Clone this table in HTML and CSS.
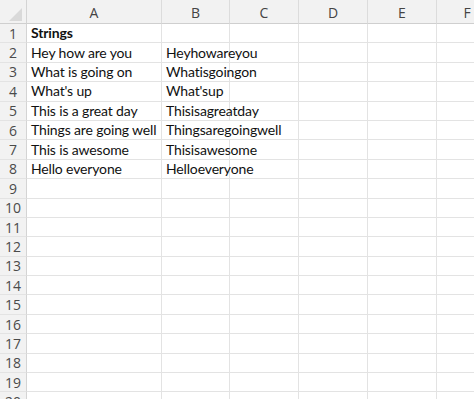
FILE: index.html
```html
<!DOCTYPE html>
<html lang="en">
<head>
<meta charset="utf-8">
<title>Sheet1</title>
<link rel="stylesheet" href="styles.css">
</head>
<body>
<div class="sheet">
  <div class="corner"><svg class="corner-mark" width="27" height="24" viewBox="0 0 27 24"><polygon points="22,8 22,21 9,21" fill="#d9d9d9"/></svg></div>
  <div class="col-head">A</div>
  <div class="col-head">B</div>
  <div class="col-head">C</div>
  <div class="col-head">D</div>
  <div class="col-head">E</div>
  <div class="col-head last">F</div>

  <div class="row-head">1</div><div class="cell bold">Strings</div><div class="cell"></div><div class="cell"></div><div class="cell"></div><div class="cell"></div><div class="cell"></div>
  <div class="row-head">2</div><div class="cell">Hey how are you</div><div class="cell">Heyhowareyou</div><div class="cell"></div><div class="cell"></div><div class="cell"></div><div class="cell"></div>
  <div class="row-head">3</div><div class="cell">What is going on</div><div class="cell">Whatisgoingon</div><div class="cell"></div><div class="cell"></div><div class="cell"></div><div class="cell"></div>
  <div class="row-head">4</div><div class="cell">What's up</div><div class="cell">What'sup</div><div class="cell"></div><div class="cell"></div><div class="cell"></div><div class="cell"></div>
  <div class="row-head">5</div><div class="cell">This is a great day</div><div class="cell">Thisisagreatday</div><div class="cell"></div><div class="cell"></div><div class="cell"></div><div class="cell"></div>
  <div class="row-head">6</div><div class="cell">Things are going well</div><div class="cell span2">Thingsaregoingwell</div><div class="cell"></div><div class="cell"></div><div class="cell"></div>
  <div class="row-head">7</div><div class="cell">This is awesome</div><div class="cell">Thisisawesome</div><div class="cell"></div><div class="cell"></div><div class="cell"></div><div class="cell"></div>
  <div class="row-head">8</div><div class="cell">Hello everyone</div><div class="cell">Helloeveryone</div><div class="cell"></div><div class="cell"></div><div class="cell"></div><div class="cell"></div>
  <div class="row-head">9</div><div class="cell"></div><div class="cell"></div><div class="cell"></div><div class="cell"></div><div class="cell"></div><div class="cell"></div>
  <div class="row-head">10</div><div class="cell"></div><div class="cell"></div><div class="cell"></div><div class="cell"></div><div class="cell"></div><div class="cell"></div>
  <div class="row-head">11</div><div class="cell"></div><div class="cell"></div><div class="cell"></div><div class="cell"></div><div class="cell"></div><div class="cell"></div>
  <div class="row-head">12</div><div class="cell"></div><div class="cell"></div><div class="cell"></div><div class="cell"></div><div class="cell"></div><div class="cell"></div>
  <div class="row-head">13</div><div class="cell"></div><div class="cell"></div><div class="cell"></div><div class="cell"></div><div class="cell"></div><div class="cell"></div>
  <div class="row-head">14</div><div class="cell"></div><div class="cell"></div><div class="cell"></div><div class="cell"></div><div class="cell"></div><div class="cell"></div>
  <div class="row-head">15</div><div class="cell"></div><div class="cell"></div><div class="cell"></div><div class="cell"></div><div class="cell"></div><div class="cell"></div>
  <div class="row-head">16</div><div class="cell"></div><div class="cell"></div><div class="cell"></div><div class="cell"></div><div class="cell"></div><div class="cell"></div>
  <div class="row-head">17</div><div class="cell"></div><div class="cell"></div><div class="cell"></div><div class="cell"></div><div class="cell"></div><div class="cell"></div>
  <div class="row-head">18</div><div class="cell"></div><div class="cell"></div><div class="cell"></div><div class="cell"></div><div class="cell"></div><div class="cell"></div>
  <div class="row-head">19</div><div class="cell"></div><div class="cell"></div><div class="cell"></div><div class="cell"></div><div class="cell"></div><div class="cell"></div>
  <div class="row-head">20</div><div class="cell"></div><div class="cell"></div><div class="cell"></div><div class="cell"></div><div class="cell"></div><div class="cell"></div>
</div>
</body>
</html>
```

FILE: styles.css
```css
html, body {
  margin: 0;
  padding: 0;
  background: #ffffff;
  overflow: hidden;
}

.sheet {
  display: grid;
  grid-template-columns: 27px 135px 68px 69px 69px 69px 60px;
  grid-template-rows: 24px repeat(20, 19.4px);
  font-family: Lato, "Open Sans", sans-serif;
  font-size: 14px;
  letter-spacing: -0.15px;
  color: #111;
}

.corner {
  background: #f2f2f2;
  border-right: 1px solid #d4d4d4;
  border-bottom: 1px solid #cfcfcf;
  box-sizing: border-box;
  position: relative;
}

.corner-mark {
  position: absolute;
  left: 0;
  top: 0;
}

.col-head {
  background: #f2f2f2;
  border-right: 1px solid #dcdcdc;
  border-bottom: 1px solid #cfcfcf;
  box-sizing: border-box;
  display: flex;
  align-items: center;
  justify-content: center;
  color: #444;
  font-family: "Open Sans", Lato, sans-serif;
  font-size: 14px;
  letter-spacing: 0;
  padding-top: 1px;
}

.col-head.last {
  border-right: none;
}

.row-head {
  background: #f2f2f2;
  border-right: 1px solid #d4d4d4;
  border-bottom: 1px solid #e3e3e3;
  box-sizing: border-box;
  display: flex;
  align-items: center;
  justify-content: center;
  color: #4a4a4a;
  font-family: "Open Sans", Lato, sans-serif;
  font-size: 14px;
  letter-spacing: 0;
}

.cell {
  border-right: 1px solid #e3e3e3;
  border-bottom: 1px solid #e3e3e3;
  box-sizing: border-box;
  padding: 0 3px 0 4px;
  white-space: nowrap;
  overflow: visible;
  display: flex;
  align-items: center;
  line-height: 1;
}

.cell.bold {
  font-weight: bold;
}

.cell.span2 {
  grid-column: span 2;
}
```
